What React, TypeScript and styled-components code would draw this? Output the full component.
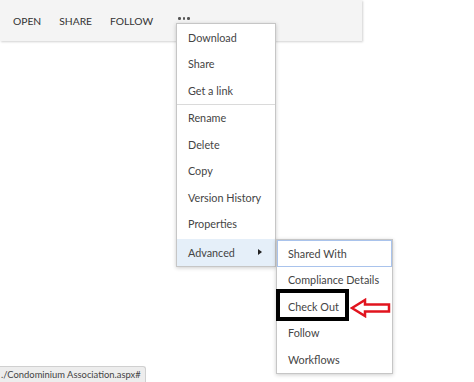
import styled, { createGlobalStyle } from 'styled-components';

const GlobalStyle = createGlobalStyle`
  html, body {
    margin: 0;
    padding: 0;
    background: #ffffff;
  }
  body {
    font-family: Lato, "Open Sans", "Liberation Sans", sans-serif;
    width: 474px;
    height: 382px;
    overflow: hidden;
  }
`;

const Page = styled.div`
  position: relative;
  width: 474px;
  height: 382px;
`;

const Toolbar = styled.div`
  display: flex;
  align-items: center;
  gap: 18px;
  width: 362px;
  height: 41px;
  padding-left: 13px;
  box-sizing: border-box;
  background: #f4f4f4;
  box-shadow: 1px 1px 2px rgba(0, 0, 0, 0.18);
`;

const ToolbarItem = styled.span`
  font-size: 10.3px;
  color: #333;
`;

const More = styled.span`
  display: flex;
  gap: 2px;
  margin-left: 7px;
  margin-top: -4px;
`;

const Dot = styled.span`
  width: 2.5px;
  height: 2.5px;
  border-radius: 50%;
  background: #555;
`;

const Menu = styled.div<{ $left: number; $top: number; $width: number }>`
  position: absolute;
  left: ${(p) => p.$left}px;
  top: ${(p) => p.$top}px;
  width: ${(p) => p.$width}px;
  display: flex;
  flex-direction: column;
  background: #fff;
  border: 1px solid #c6c6c6;
  box-shadow: 0 1px 4px rgba(0, 0, 0, 0.2);
  box-sizing: border-box;
`;

const Item = styled.div<{ $active?: boolean; $outlined?: boolean }>`
  position: relative;
  display: flex;
  align-items: center;
  justify-content: space-between;
  height: 26.5px;
  padding: 0 10px 0 10px;
  box-sizing: border-box;
  font-size: 10.8px;
  color: #444;
  white-space: nowrap;
  background: ${(p) => (p.$active ? '#e5eff9' : 'transparent')};
  border: 1px solid ${(p) => (p.$outlined ? '#a9c3ec' : 'transparent')};
  margin-top: ${(p) => (p.$active ? '2px' : '0')};
`;

const Separator = styled.div`
  height: 1px;
  background: #dadada;
`;

const Caret = styled.span`
  width: 0;
  height: 0;
  border-top: 3px solid transparent;
  border-bottom: 3px solid transparent;
  border-left: 4px solid #222;
  margin-right: 2px;
`;

const Highlight = styled.div`
  position: absolute;
  left: -1px;
  top: 49px;
  width: 73px;
  height: 32px;
  border: 4px solid #000;
  box-sizing: border-box;
`;

const Arrow = styled.svg`
  position: absolute;
  left: 73px;
  top: 58px;
`;

const StatusBar = styled.div`
  position: absolute;
  left: 0;
  bottom: 0;
  height: 15px;
  padding: 0 4px 0 1px;
  display: flex;
  align-items: center;
  background: #ededed;
  border: 1px solid #d0d0d0;
  border-left: none;
  border-bottom: none;
  border-top-right-radius: 3px;
  font-size: 9.4px;
  color: #444;
  white-space: nowrap;
`;

const mainItems = ['Download', 'Share', 'Get a link'];
const editItems = ['Rename', 'Delete', 'Copy', 'Version History', 'Properties'];
const advancedItems = ['Shared With', 'Compliance Details', 'Check Out', 'Follow', 'Workflows'];

export default function App() {
  return (
    <Page>
      <GlobalStyle />
      <Toolbar>
        <ToolbarItem>OPEN</ToolbarItem>
        <ToolbarItem>SHARE</ToolbarItem>
        <ToolbarItem>FOLLOW</ToolbarItem>
        <More>
          <Dot />
          <Dot />
          <Dot />
        </More>
      </Toolbar>

      <Menu $left={176} $top={23} $width={100}>
        {mainItems.map((label) => (
          <Item key={label}>{label}</Item>
        ))}
        <Separator />
        {editItems.map((label) => (
          <Item key={label}>{label}</Item>
        ))}
        <Item $active>
          Advanced
          <Caret />
        </Item>
      </Menu>

      <Menu $left={276} $top={239} $width={117}>
        {advancedItems.map((label, i) => (
          <Item key={label} $outlined={i === 0}>
            {label}
          </Item>
        ))}
        <Highlight />
        <Arrow width="42" height="20" viewBox="0 0 42 20">
          <path
            d="M2 10 L15 2 L15 6.5 L39 6.5 L39 13.5 L15 13.5 L15 18 Z"
            fill="#fff"
            stroke="#e1141e"
            strokeWidth="2.5"
            strokeLinejoin="miter"
          />
        </Arrow>
      </Menu>

      <StatusBar>./Condominium Association.aspx#</StatusBar>
    </Page>
  );
}
